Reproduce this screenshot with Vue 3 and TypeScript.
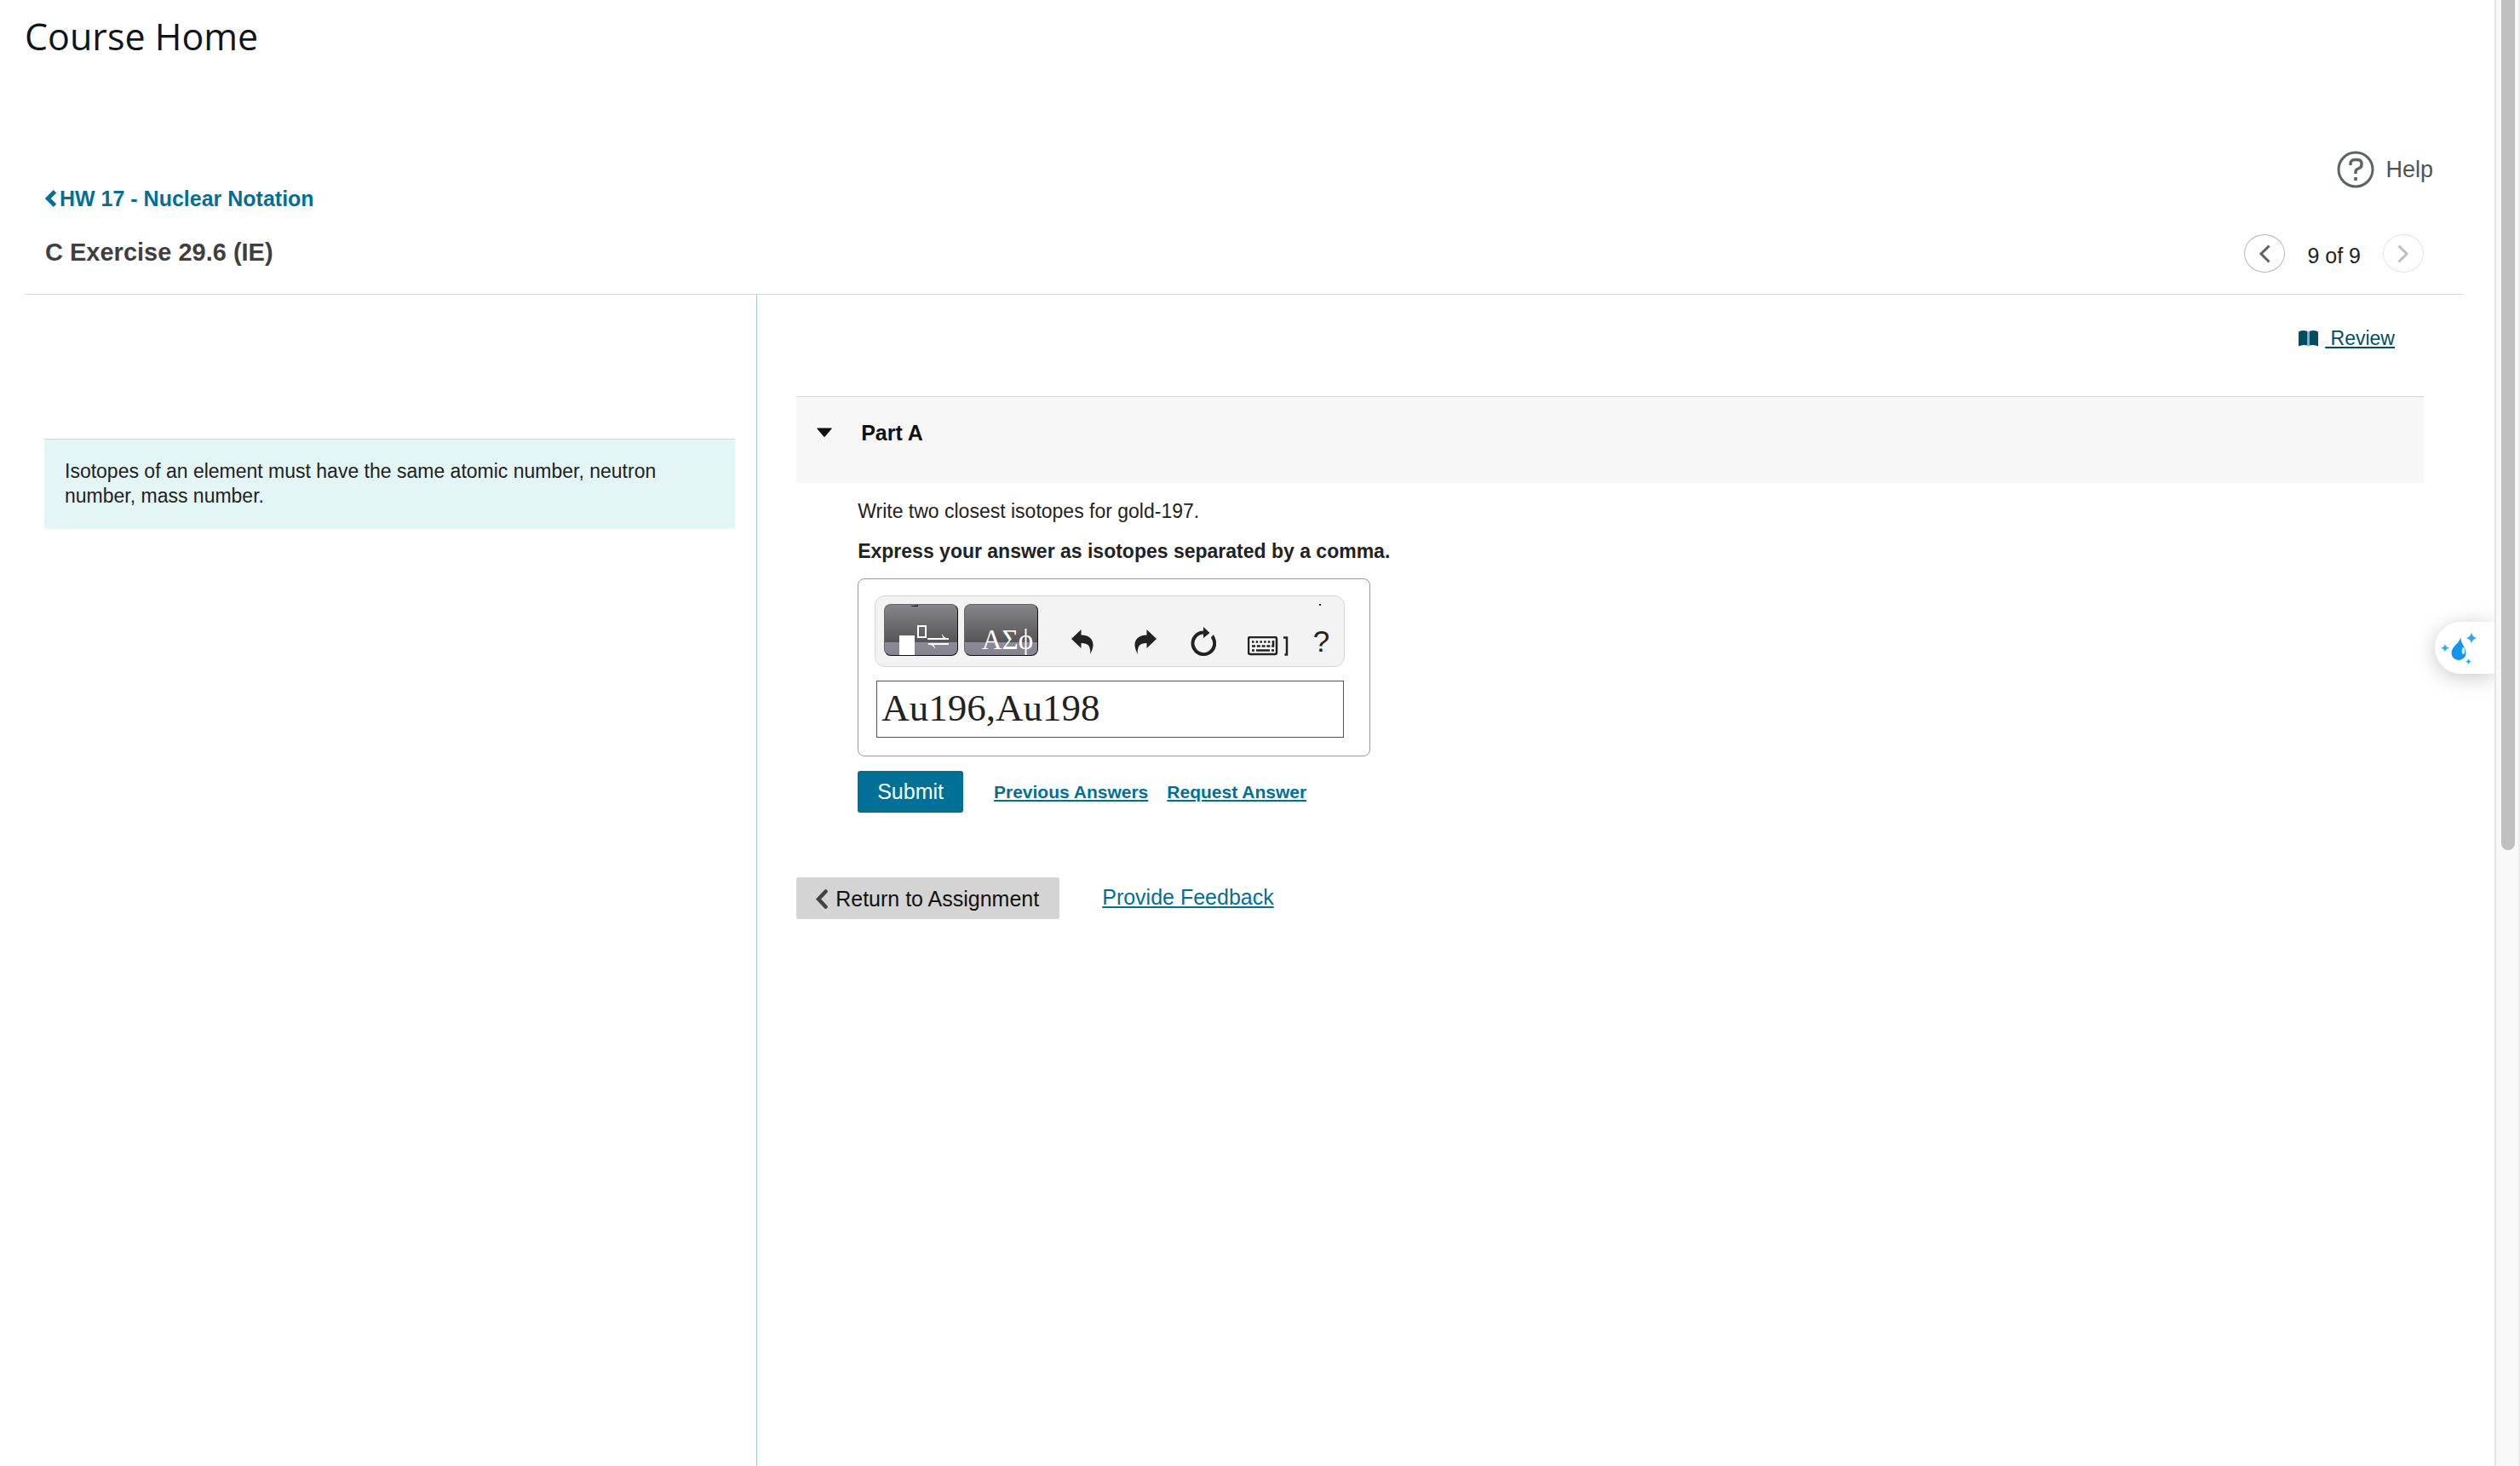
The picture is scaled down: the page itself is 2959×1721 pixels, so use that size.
<script setup lang="ts">
import { ref } from 'vue'

const answer = ref('Au196,Au198')
const expanded = ref(true)
const current = 9
const total = 9
</script>

<template>
  <div class="page">
    <div class="content">
      <h1 class="course">Course Home</h1>

      <header class="header">
        <div class="header-left">
          <a class="back" href="#assignment">
            <svg width="14" height="20" viewBox="0 0 14 20" aria-hidden="true">
              <path d="M11.500 1.800 3.200 10l8.300 8.200" fill="none" stroke="currentColor" stroke-width="4.800" />
            </svg>
            <span>HW 17 - Nuclear Notation</span>
          </a>
          <h2 class="title">C Exercise 29.6 (IE)</h2>
        </div>
        <div class="header-right">
          <a class="help" href="#help">
            <svg width="44" height="44" viewBox="0 0 44 44" fill="none" stroke="#5b6463" aria-hidden="true">
              <circle cx="22" cy="22" r="20" stroke-width="3" />
              <path d="M16 17v-1.500q0-5 5-5h3q5 0 5 5v1q0 3-3 4l-2 1q-2 1-2 3v2.500" stroke-width="3.400" />
              <path d="M22 31v4" stroke-width="3.600" />
            </svg>
            <span>Help</span>
          </a>
          <nav class="pager" aria-label="Item navigation">
            <button type="button" class="round" aria-label="Previous item">
              <svg width="14" height="22" viewBox="0 0 14 22" aria-hidden="true">
                <path d="M12.500 1.500 3 11l9.500 9.500" fill="none" stroke="currentColor" stroke-width="3" />
              </svg>
            </button>
            <span class="count">{{ current }} of {{ total }}</span>
            <button type="button" class="round" aria-label="Next item" disabled>
              <svg width="14" height="22" viewBox="0 0 14 22" aria-hidden="true">
                <path d="M1.500 1.500 11 11l-9.500 9.500" fill="none" stroke="currentColor" stroke-width="3" />
              </svg>
            </button>
          </nav>
        </div>
      </header>

      <div class="columns">
        <aside class="left">
          <p class="note">Isotopes of an element must have the same atomic number, neutron number, mass number.</p>
        </aside>

        <main class="right">
          <div class="review-row">
            <svg width="23" height="19" viewBox="0 0 23 19" aria-hidden="true">
              <path d="M0 1.500Q5-1 10.500 1v16.500Q5 16 0 18.500Z" fill="#004e66" />
              <path d="M23 1.500Q18-1 12.500 1v16.500Q18 16 23 18.500Z" fill="#004e66" />
              <path d="M11.500 1.500V18.500" stroke="#8fb0bc" stroke-width="2" />
            </svg>
            <a class="review" href="#review">&nbsp;Review</a>
          </div>

          <button type="button" class="part" :aria-expanded="expanded" @click="expanded = !expanded">
            <svg width="18" height="11" viewBox="0 0 18 11" aria-hidden="true">
              <path d="M1 .5h16q1 0 .4.9L10 10.300q-1 1-2 0L.6 1.400Q0 .5 1 .5Z" fill="#111" />
            </svg>
            <span>Part A</span>
          </button>

          <form v-if="expanded" class="question" @submit.prevent>
            <p>Write two closest isotopes for gold-197.</p>
            <label for="answer">Express your answer as isotopes separated by a comma.</label>

            <div class="editor">
              <div class="toolbar">
                <button type="button" class="dark" aria-label="Templates">
                  <svg width="85" height="59" viewBox="0 0 85 59" aria-hidden="true">
                    <path d="M30 1.500l9-1v1.500h-8Z" fill="#111" />
                    <rect x="17" y="36" width="18" height="23" fill="#fff" />
                    <rect x="39" y="25" width="9" height="13" fill="none" stroke="#fff" stroke-width="2" />
                    <path d="M50 40h25M51 46h24" stroke="#fff" stroke-width="2" />
                    <path d="M67 34q2 5 8 6h-5q-3-2-3-6ZM59 52q-2-5-8-6h5q3 2 3 6Z" fill="#fff" />
                  </svg>
                </button>
                <button type="button" class="dark symbols">ΑΣϕ</button>
                <button type="button" class="tool undo" aria-label="Undo">
                  <svg width="26" height="29" viewBox="0 0 26 29" aria-hidden="true">
                    <path d="M0 11 11.500 0v6.500C20 6.500 26 11 25.500 19q-.5 5-3.500 10 1-7-2-10.500Q17 15.500 11.500 16v6Z" fill="#222" />
                  </svg>
                </button>
                <button type="button" class="tool redo" aria-label="Redo">
                  <svg width="26" height="29" viewBox="0 0 26 29" aria-hidden="true">
                    <path d="M26 11 14.500 0v6.500C6 6.500 0 11 .5 19q.5 5 3.500 10-1-7 2-10.500Q9 15.500 14.500 16v6Z" fill="#222" />
                  </svg>
                </button>
                <button type="button" class="tool reset" aria-label="Reset">
                  <svg width="30" height="34" viewBox="0 0 30 34" aria-hidden="true">
                    <path d="M16 6.500A12.800 12.800 0 1 0 25.500 11.500" fill="none" stroke="#222" stroke-width="4" />
                    <path d="M15 0 22.500 7 15 13ZM24 12l3-3 1.500 4Z" fill="#222" />
                  </svg>
                </button>
                <button type="button" class="tool keys" aria-label="Keyboard shortcuts">
                  <svg width="48" height="23" viewBox="0 0 48 23" aria-hidden="true">
                    <rect x="1" y="1" width="33" height="20" rx="2" fill="#f7f7f7" stroke="#222" stroke-width="2.500" />
                    <path d="M5 6.500h22" stroke="#222" stroke-width="2.500" stroke-dasharray="2.500 2.200" />
                    <path d="M5 11.500h26" stroke="#222" stroke-width="2.500" stroke-dasharray="4 1.800" />
                    <path d="M5 16.500h3M10 16.500h16M28 16.500h3M30 5v7" stroke="#222" stroke-width="2.500" />
                    <path d="M42 1.500h4v20h-2.500" fill="none" stroke="#222" stroke-width="2.500" />
                  </svg>
                </button>
                <button type="button" class="tool what" aria-label="Help">
                  <svg width="4" height="3" viewBox="0 0 4 3" aria-hidden="true"><path d="M0 0h2v2H0Z" fill="#222" /></svg>
                  <span>?</span>
                </button>
              </div>
              <input id="answer" v-model="answer" class="answer" type="text" autocomplete="off" />
            </div>

            <div class="actions">
              <button type="submit" class="submit">Submit</button>
              <a href="#previous">Previous Answers</a>
              <a href="#request">Request Answer</a>
            </div>
          </form>

          <div class="footer">
            <button type="button" class="return">
              <svg width="16" height="23" viewBox="0 0 16 23" aria-hidden="true">
                <path d="M12.500 2.500 4 11.500l8.500 9" fill="none" stroke="#444" stroke-width="4.500" stroke-linecap="round" />
              </svg>
              <span>Return to Assignment</span>
            </button>
            <a class="feedback" href="#feedback">Provide Feedback</a>
          </div>
        </main>
      </div>

      <button type="button" class="assistant" aria-label="Open assistant">
        <svg width="70" height="61" viewBox="0 0 70 61" aria-hidden="true">
          <path d="M30.500 17c-1 8-11 12-11 19.500a8.500 8.500 0 0 0 17 0c0-8-7-10.500-6-19.500Z" fill="#1296f0" />
          <ellipse cx="33.500" cy="34" rx="1.800" ry="4" fill="#d9effd" />
          <path d="M43 12.500q1 5.500 6.500 6.500-5.500 1-6.500 6.500-1-5.500-6.500-6.500 5.500-1 6.500-6.500ZM12 26q.8 4 5 4.500-4.200.7-5 5-.8-4.300-5-5 4.200-.5 5-4.500ZM39.500 43q.5 3 3.500 3.500-3 .5-3.500 3.500-.5-3-3.500-3.500 3-.5 3.500-3.500Z" fill="#2fa6f3" />
        </svg>
      </button>
    </div>

    <div class="scrollbar" aria-hidden="true"><div class="thumb"></div></div>
  </div>
</template>

<style>
body {
  background: #fff;
}
</style>

<style scoped>
* {
  box-sizing: border-box;
}
h1,
h2,
p {
  margin: 0;
}
button {
  margin: 0;
  padding: 0;
  border: 0;
  background: none;
  font: inherit;
  color: inherit;
}
svg {
  display: block;
  flex: none;
}
.page {
  display: flex;
  min-height: 100vh;
  font-family: 'Liberation Sans', Arial, sans-serif;
  font-size: 23px;
  line-height: 30px;
  color: #222;
}
.content {
  position: relative;
  flex: 1;
  min-width: 0;
  display: flex;
  flex-direction: column;
  padding: 0 36px 0 29px;
}
.course {
  font-family: 'Open Sans', 'Noto Sans', sans-serif;
  font-size: 43px;
  font-weight: 400;
  line-height: 86px;
  height: 84px;
  color: #11161c;
}
.header {
  display: flex;
  justify-content: space-between;
  border-bottom: 1px solid #d9d9d9;
}
.header-left {
  padding: 134px 0 32px 24px;
}
.back {
  display: flex;
  align-items: center;
  gap: 3px;
  font-size: 25px;
  font-weight: 700;
  color: #007096;
  text-decoration: none;
}
.title {
  margin-top: 31px;
  font-size: 29px;
  line-height: 34px;
  color: #3f3f3f;
}
.header-right {
  display: flex;
  flex-direction: column;
  align-items: flex-end;
  padding-top: 93px;
}
.help {
  display: flex;
  align-items: center;
  gap: 13px;
  margin-right: 36px;
  font-size: 27px;
  color: #4f5554;
  text-decoration: none;
}
.pager {
  display: flex;
  align-items: center;
  gap: 26px;
  margin: 54px 47px 0 0;
}
.count {
  padding-top: 5px;
  font-size: 25px;
}
.round {
  display: flex;
  align-items: center;
  justify-content: center;
  width: 48px;
  height: 45px;
  border: 1px solid #b5b5b5;
  border-radius: 50%;
  color: #5b6463;
}
.round:disabled {
  border-color: #e3e3e3;
  color: #bfbfbf;
}
.columns {
  flex: 1;
  display: grid;
  grid-template-columns: 30% 70%;
}
.left {
  padding: 169px 25px 0 23px;
}
.note {
  padding: 23px 64px 24px 24px;
  min-height: 105px;
  border-top: 1px solid #c9dcdc;
  background: #e3f5f5;
  line-height: 29px;
}
.right {
  padding: 36px 47px 0 46px;
  border-left: 1px solid #a9c6d9;
}
.review-row {
  display: flex;
  align-items: center;
  justify-content: flex-end;
  gap: 8px;
  padding-right: 34px;
}
.review {
  color: #004e66;
  text-underline-offset: 2px;
  text-decoration-thickness: 2px;
}
.part {
  display: flex;
  align-items: center;
  gap: 34px;
  width: 100%;
  height: 102px;
  margin-top: 53px;
  padding: 0 24px 18px;
  border-top: 1px solid #d9d9d9;
  background: #f7f7f7;
  font-size: 25px;
  font-weight: 700;
  color: #111;
}
.question {
  display: flex;
  flex-direction: column;
  align-items: flex-start;
  gap: 17px;
  padding: 18px 0 0 72px;
}
.question label {
  font-weight: 700;
}
.editor {
  display: flex;
  flex-direction: column;
  gap: 16px;
  width: 602px;
  max-width: 100%;
  padding: 19px 29px 21px 19px;
  border: 1px solid #999;
  border-radius: 8px;
}
.toolbar {
  display: flex;
  align-items: flex-end;
  height: 84px;
  padding: 0 17px 12px 10px;
  border: 1px solid #d6d6d6;
  border-radius: 12px;
  background: #f3f3f3;
}
.dark {
  width: 87px;
  height: 61px;
  margin-right: 7px;
  border: 1px solid #111;
  border-top-color: #666;
  border-left-color: #666;
  border-radius: 8px;
  background: linear-gradient(#86858b 0, #555 75%, #8d8a99 75%, #85838f 100%);
  overflow: hidden;
}
.symbols {
  padding: 22px 5px 0 0;
  font-family: 'Liberation Serif', 'DejaVu Serif', serif;
  font-size: 33px;
  text-align: right;
  color: #fff;
}
.tool {
  margin-bottom: 2px;
}
.undo {
  margin-left: 32px;
}
.redo {
  margin-left: 48px;
}
.reset {
  margin-left: 40px;
  margin-bottom: 0;
}
.keys {
  margin-left: 37px;
  margin-bottom: 0;
}
.what {
  display: flex;
  flex-direction: column;
  justify-content: space-between;
  align-items: center;
  height: 61px;
  margin: 0 0 0 auto;
  padding-bottom: 2px;
  font-size: 35px;
}
.answer {
  height: 67px;
  margin: 0 1px 0 2px;
  padding: 0 5px 3px;
  border: 1px solid #007096;
  border-radius: 0;
  outline: 0;
  background: #fff;
  font-family: 'Liberation Serif', 'Times New Roman', serif;
  font-size: 45px;
  color: #222;
}
.actions {
  display: flex;
  align-items: center;
  font-size: 21px;
}
.actions a {
  margin-left: 22px;
  font-weight: 700;
  color: #007096;
  text-underline-offset: 2px;
  text-decoration-thickness: 2px;
}
.submit {
  height: 49px;
  margin-right: 14px;
  padding: 0 23px 2px;
  border-radius: 3px;
  background: #007096;
  font-size: 25px;
  color: #fff;
}
.footer {
  display: flex;
  align-items: center;
  gap: 50px;
  margin-top: 76px;
  font-size: 25px;
}
.return {
  display: flex;
  align-items: center;
  gap: 8px;
  height: 49px;
  padding: 1px 24px 0 22px;
  border-radius: 3px;
  background: #d4d4d4;
  color: #111;
}
.feedback {
  padding-bottom: 3px;
  color: #007096;
  text-underline-offset: 2px;
  text-decoration-thickness: 2px;
}
.assistant {
  position: absolute;
  top: 730px;
  right: 0;
  border-radius: 31px 0 0 31px;
  background: #fff;
  box-shadow: 0 4px 24px rgba(0, 0, 0, 0.22);
  clip-path: inset(-40px 0 -40px -40px);
}
.scrollbar {
  width: 30px;
  padding-left: 6px;
  border-left: 2px solid #e5e5e5;
  border-right: 2px solid #ececec;
  background: #f9f9f9;
}
.thumb {
  width: 16px;
  height: 58vh;
  border-radius: 0 0 8px 8px;
  background: #c0c0c0;
}
</style>
